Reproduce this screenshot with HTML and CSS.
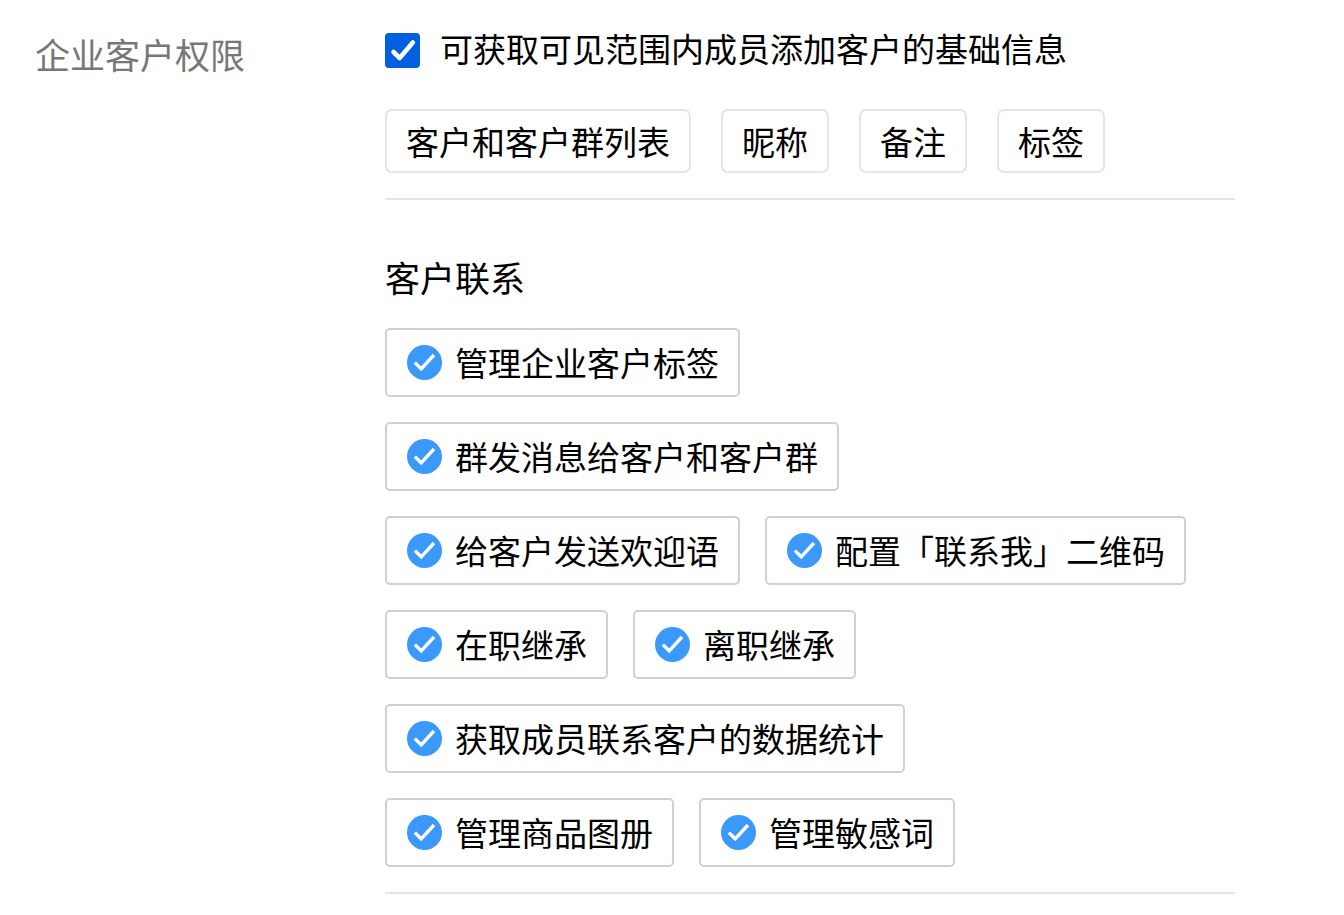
FILE: index.html
```
<!DOCTYPE html>
<html lang="zh-CN">
<head>
  <meta charset="UTF-8" />
  <meta name="viewport" content="width=device-width, initial-scale=1.0"/>
  <title>企业客户权限</title>
  <link rel="stylesheet" href="styles.css">
</head>
<body>
  <svg class="sprite" aria-hidden="true">
    <symbol id="icon-box" viewBox="0 0 35 35">
      <rect width="35" height="35" rx="4" fill="#0060df"/>
      <path d="M8.5 19L14.7 25L27.8 9.5" fill="none" stroke="#fff" stroke-width="4.6" stroke-linecap="round" stroke-linejoin="round"/>
    </symbol>
    <symbol id="icon-circle" viewBox="0 0 35 35">
      <circle cx="17.5" cy="17.5" r="17.5" fill="#3b99fc"/>
      <path d="M7.9 17.6L14.2 23.8L27 10" fill="none" stroke="#fff" stroke-width="3.4"/>
    </symbol>
  </svg>

  <main class="permission">
    <h1 class="permission-title">企业客户权限</h1>

    <div class="permission-body">
      <section class="section">
        <label class="check">
          <input type="checkbox" checked />
          <svg class="icon"><use href="#icon-box"/></svg>
          <span>可获取可见范围内成员添加客户的基础信息</span>
        </label>
        <ul class="tags">
          <li class="tag">客户和客户群列表</li>
          <li class="tag">昵称</li>
          <li class="tag">备注</li>
          <li class="tag">标签</li>
        </ul>
      </section>

      <section class="section">
        <h2 class="section-title">客户联系</h2>
        <div class="options">
          <label class="option">
            <input type="checkbox" checked />
            <svg class="icon"><use href="#icon-circle"/></svg>
            <span>管理企业客户标签</span>
          </label>
          <label class="option">
            <input type="checkbox" checked />
            <svg class="icon"><use href="#icon-circle"/></svg>
            <span>群发消息给客户和客户群</span>
          </label>
          <label class="option">
            <input type="checkbox" checked />
            <svg class="icon"><use href="#icon-circle"/></svg>
            <span>给客户发送欢迎语</span>
          </label>
          <label class="option">
            <input type="checkbox" checked />
            <svg class="icon"><use href="#icon-circle"/></svg>
            <span>配置「联系我」二维码</span>
          </label>
          <label class="option">
            <input type="checkbox" checked />
            <svg class="icon"><use href="#icon-circle"/></svg>
            <span>在职继承</span>
          </label>
          <label class="option">
            <input type="checkbox" checked />
            <svg class="icon"><use href="#icon-circle"/></svg>
            <span>离职继承</span>
          </label>
          <label class="option">
            <input type="checkbox" checked />
            <svg class="icon"><use href="#icon-circle"/></svg>
            <span>获取成员联系客户的数据统计</span>
          </label>
          <label class="option">
            <input type="checkbox" checked />
            <svg class="icon"><use href="#icon-circle"/></svg>
            <span>管理商品图册</span>
          </label>
          <label class="option">
            <input type="checkbox" checked />
            <svg class="icon"><use href="#icon-circle"/></svg>
            <span>管理敏感词</span>
          </label>
        </div>
      </section>
    </div>
  </main>
</body>
</html>
```
FILE: styles.css
```
* {
  box-sizing: border-box;
}

body {
  margin: 0;
  background: #fff;
  color: #000;
  font-family: "Noto Sans CJK SC", sans-serif;
  font-size: 33px;
  font-weight: 400;
  line-height: 40px;
}

h1, h2, ul {
  margin: 0;
  padding: 0;
  font-weight: inherit;
  list-style: none;
}

.sprite {
  display: none;
}

.permission {
  display: grid;
  grid-template-columns: 350px 1fr;
  padding: 28px 109px 20px 35px;
}

.permission-title {
  font-size: 35px;
  line-height: 52px;
  color: #777;
}

.section {
  padding-bottom: 25px;
  border-bottom: 2px solid #e4e4e8;
}

.section + .section {
  padding-top: 57px;
}

.section-title {
  margin-bottom: 31px;
  font-size: 35px;
}

/* the real checkbox lies invisibly over its icon */
.check,
.option {
  position: relative;
  display: flex;
  align-items: center;
  cursor: pointer;
}

.check input,
.option input {
  position: absolute;
  width: 35px;
  height: 35px;
  margin: 0;
  opacity: 0;
  cursor: pointer;
}

.icon {
  flex: none;
  width: 35px;
  height: 35px;
}

.check {
  gap: 20px;
}

.check span {
  padding-bottom: 5px;
}

.tags {
  display: flex;
  flex-wrap: wrap;
  gap: 30px;
  margin-top: 36px;
}

.tag {
  padding: 10px 19px;
  border: 2px solid #e5e5e5;
  border-radius: 7px;
}

.options {
  display: flex;
  flex-wrap: wrap;
  row-gap: 25px;
}

.option {
  gap: 13px;
  height: 69px;
  margin-right: 25px;
  padding: 0 19px 0 20px;
  border: 2px solid #d0d0d0;
  border-radius: 5px;
}

.option span {
  padding-bottom: 2px;
}
```
